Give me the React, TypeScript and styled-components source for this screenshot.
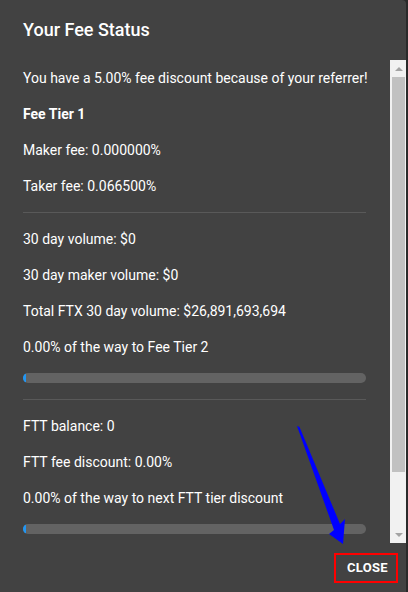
import styled, { createGlobalStyle } from 'styled-components'

const GlobalStyle = createGlobalStyle`
  html, body {
    margin: 0;
    padding: 0;
    background: #2a2a2a;
  }
  * {
    box-sizing: border-box;
  }
`

const Dialog = styled.div`
  position: relative;
  width: 406px;
  height: 592px;
  background-color: #424242;
  border-top-right-radius: 4px;
  display: flex;
  flex-direction: column;
  font-family: Roboto, 'Liberation Sans', sans-serif;
  color: #fff;
`

const Title = styled.h2`
  margin: 0;
  height: 60px;
  padding: 0 23px;
  display: flex;
  align-items: center;
  font-size: 18px;
  font-weight: 500;
  line-height: 24px;
`

const Body = styled.div`
  flex: 1;
  min-height: 0;
  display: flex;
`

const Content = styled.div`
  flex: 1;
  min-width: 0;
  overflow: hidden;
  padding: 8px 24px 0 23px;
  display: flex;
  flex-direction: column;
  gap: 16px;
`

const ScrollBar = styled.div`
  width: 16px;
  flex-shrink: 0;
  background-color: #f1f1f1;
  display: flex;
  flex-direction: column;
`

const ScrollButton = styled.div`
  height: 17px;
  flex-shrink: 0;
  display: flex;
  align-items: center;
  justify-content: center;
  padding-left: 1px;
`

const Caret = styled.span<{ $down?: boolean }>`
  width: 0;
  height: 0;
  border-left: 4px solid transparent;
  border-right: 4px solid transparent;
  ${(p) => (p.$down ? 'border-top: 4px solid #a3a3a3;' : 'border-bottom: 4px solid #a3a3a3;')}
`

const ScrollTrack = styled.div`
  flex: 1;
  padding: 0 1px 0 2px;
`

const Thumb = styled.div`
  background-color: #c1c1c1;
`

const Line = styled.p<{ $bold?: boolean }>`
  margin: 0;
  font-size: 14px;
  line-height: 20px;
  font-weight: ${(p) => (p.$bold ? 700 : 400)};
  white-space: nowrap;
`

const Divider = styled.hr`
  margin: 0;
  border: 0;
  height: 1px;
  flex-shrink: 0;
  background-color: rgba(255, 255, 255, 0.12);
`

const Track = styled.div`
  height: 10px;
  flex-shrink: 0;
  border-radius: 5px;
  background-color: #636363;
  overflow: hidden;
`

const Fill = styled.div`
  height: 100%;
  min-width: 3px;
  background-color: #2196f3;
  border-radius: 5px;
`

const Actions = styled.div`
  height: 49px;
  flex-shrink: 0;
  display: flex;
  align-items: center;
  justify-content: flex-end;
  padding-right: 8px;
`

const Highlight = styled.div`
  border: 2px solid #ff0000;
  height: 30px;
  width: 64px;
  display: flex;
  align-items: center;
  justify-content: center;
`

const CloseButton = styled.button`
  background: none;
  border: 0;
  padding: 0 0 0 3px;
  color: #fff;
  font-family: Roboto, 'Liberation Sans', sans-serif;
  font-size: 13px;
  font-weight: 700;
  letter-spacing: 0.3px;
  text-transform: uppercase;
  cursor: pointer;
`

const ArrowLayer = styled.svg`
  position: absolute;
  left: 0;
  top: 0;
  width: 406px;
  height: 592px;
  pointer-events: none;
`

const ProgressBar = ({ value }: { value: number }) => (
  <Track>
    <Fill style={{ width: `${value}%` }} />
  </Track>
)

export default function App() {
  return (
    <>
      <GlobalStyle />
      <Dialog>
        <Title>Your Fee Status</Title>
        <Body>
          <Content>
            <Line>You have a 5.00% fee discount because of your referrer!</Line>
            <Line $bold>Fee Tier 1</Line>
            <Line>Maker fee: 0.000000%</Line>
            <Line>Taker fee: 0.066500%</Line>
            <Divider />
            <Line>30 day volume: $0</Line>
            <Line>30 day maker volume: $0</Line>
            <Line>Total FTX 30 day volume: $26,891,693,694</Line>
            <Line>0.00% of the way to Fee Tier 2</Line>
            <ProgressBar value={0} />
            <Divider />
            <Line>FTT balance: 0</Line>
            <Line>FTT fee discount: 0.00%</Line>
            <Line>0.00% of the way to next FTT tier discount</Line>
            <ProgressBar value={0} />
          </Content>
          <ScrollBar>
            <ScrollButton>
              <Caret />
            </ScrollButton>
            <ScrollTrack>
              <Thumb style={{ height: '88%' }} />
            </ScrollTrack>
            <ScrollButton>
              <Caret $down />
            </ScrollButton>
          </ScrollBar>
        </Body>
        <Actions>
          <Highlight>
            <CloseButton>Close</CloseButton>
          </Highlight>
        </Actions>
        <ArrowLayer viewBox="0 0 406 592">
          <polygon points="297,426 299.5,427 340,524 345,519 343,544 329,534 334,530" fill="#0000ff" />
        </ArrowLayer>
      </Dialog>
    </>
  )
}
